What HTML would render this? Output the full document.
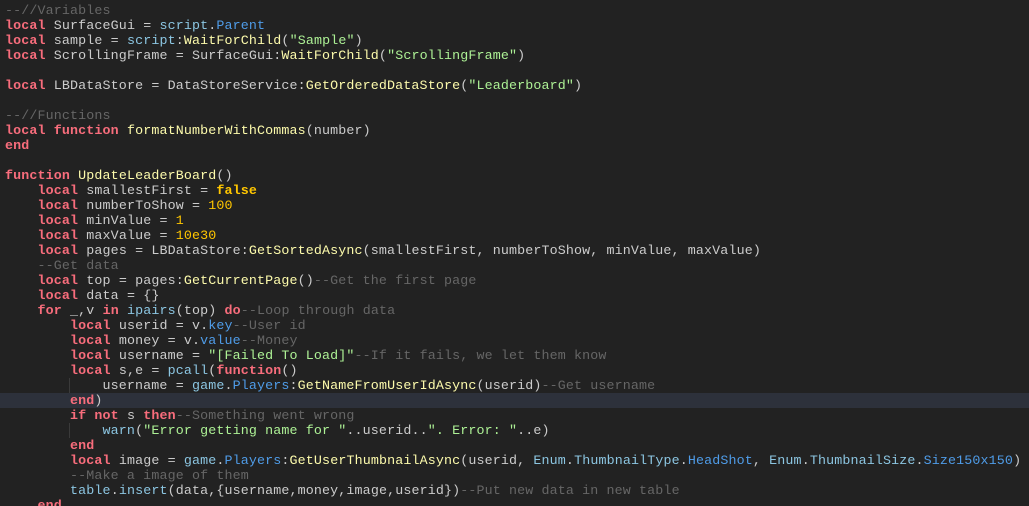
<!DOCTYPE html>
<html><head><style>
html,body{margin:0;padding:0;background:#222222;width:1029px;height:506px;overflow:hidden}
pre{margin:0;padding:4px 0 0 5px;font-family:"Liberation Mono",monospace;font-size:13.33px;letter-spacing:0.13px;line-height:15px;color:#cccccc;position:relative}
.k{color:#f86d7c;font-weight:bold}
.c{color:#666666}
.b{color:#8cc6e2}
.m{color:#4f9ce8}
.f{color:#fdfbac}
.s{color:#adf195}
.n{color:#ffc600}
.hl{position:absolute;left:0;width:1029px;top:393px;height:15px;background:#2d313b}
.g{position:absolute;width:1px;background:#3a3a3a}
</style></head><body>
<div class="hl"></div>
<div class="g" style="left:69px;top:378px;height:15px"></div>
<div class="g" style="left:69px;top:423px;height:15px"></div>
<pre><span class="c">--//Variables</span>
<span class="k">local</span> SurfaceGui = <span class="b">script</span>.<span class="m">Parent</span>
<span class="k">local</span> sample = <span class="b">script</span>:<span class="f">WaitForChild</span>(<span class="s">"Sample"</span>)
<span class="k">local</span> ScrollingFrame = SurfaceGui:<span class="f">WaitForChild</span>(<span class="s">"ScrollingFrame"</span>)

<span class="k">local</span> LBDataStore = DataStoreService:<span class="f">GetOrderedDataStore</span>(<span class="s">"Leaderboard"</span>)

<span class="c">--//Functions</span>
<span class="k">local function</span> <span class="f">formatNumberWithCommas</span>(number)
<span class="k">end</span>

<span class="k">function</span> <span class="f">UpdateLeaderBoard</span>()
    <span class="k">local</span> smallestFirst = <span class="k" style="color:#ffc600">false</span>
    <span class="k">local</span> numberToShow = <span class="n">100</span>
    <span class="k">local</span> minValue = <span class="n">1</span>
    <span class="k">local</span> maxValue = <span class="n">10e30</span>
    <span class="k">local</span> pages = LBDataStore:<span class="f">GetSortedAsync</span>(smallestFirst, numberToShow, minValue, maxValue)
    <span class="c">--Get data</span>
    <span class="k">local</span> top = pages:<span class="f">GetCurrentPage</span>()<span class="c">--Get the first page</span>
    <span class="k">local</span> data = {}
    <span class="k">for</span> _,v <span class="k">in</span> <span class="b">ipairs</span>(top) <span class="k">do</span><span class="c">--Loop through data</span>
        <span class="k">local</span> userid = v.<span class="m">key</span><span class="c">--User id</span>
        <span class="k">local</span> money = v.<span class="m">value</span><span class="c">--Money</span>
        <span class="k">local</span> username = <span class="s">"[Failed To Load]"</span><span class="c">--If it fails, we let them know</span>
        <span class="k">local</span> s,e = <span class="b">pcall</span>(<span class="k">function</span>()
            username = <span class="b">game</span>.<span class="m">Players</span>:<span class="f">GetNameFromUserIdAsync</span>(userid)<span class="c">--Get username</span>
        <span class="k">end</span>)
        <span class="k">if not</span> s <span class="k">then</span><span class="c">--Something went wrong</span>
            <span class="b">warn</span>(<span class="s">"Error getting name for "</span>..userid..<span class="s">". Error: "</span>..e)
        <span class="k">end</span>
        <span class="k">local</span> image = <span class="b">game</span>.<span class="m">Players</span>:<span class="f">GetUserThumbnailAsync</span>(userid, <span class="b">Enum</span>.<span class="b">ThumbnailType</span>.<span class="m">HeadShot</span>, <span class="b">Enum</span>.<span class="b">ThumbnailSize</span>.<span class="m">Size150x150</span>)
        <span class="c">--Make a image of them</span>
        <span class="b">table</span>.<span class="b">insert</span>(data,{username,money,image,userid})<span class="c">--Put new data in new table</span>
    <span class="k">end</span>
</pre>
</body></html>
